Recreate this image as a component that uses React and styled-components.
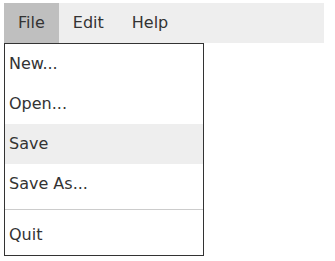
import React from 'react';
import styled, { createGlobalStyle } from 'styled-components';

const GlobalStyle = createGlobalStyle`
body {
margin: 0;
background: #fff;
font-family: 'DejaVu Sans', sans-serif;
font-size: 16px;
color: #333;
}
`;

const Page = styled.div`
padding: 3px 4px;
`;

const MenuBar = styled.div`
display: flex;
width: 320px;
height: 40px;
background: #eee;
`;

const MenuTitle = styled.div`
padding: 0 14px;
line-height: 40px;
background: ${(props) => (props.$open ? '#bfbfbf' : 'transparent')};
cursor: default;
`;

const Dropdown = styled.div`
width: 198px;
background: #fff;
border: 1px solid #333;
`;

const Item = styled.div`
padding: 0 4px;
line-height: 40px;
background: ${(props) => (props.$active ? '#eee' : 'transparent')};
`;

const Separator = styled.div`
height: 1px;
margin: 5px 0;
background: #ccc;
`;

const menus = ['File', 'Edit', 'Help'];
const fileItems = ['New...', 'Open...', 'Save', 'Save As...', '-', 'Quit'];

const App = () => (
	<Page>
		<GlobalStyle />
		<MenuBar>
			{menus.map((menu) => <MenuTitle key={menu} $open={menu === 'File'}>{menu}</MenuTitle>)}
		</MenuBar>
		<Dropdown>
			{fileItems.map((item, i) => (item === '-'
				? <Separator key={i} />
				: <Item key={i} $active={item === 'Save'}>{item}</Item>))}
		</Dropdown>
	</Page>
);

export default App;
